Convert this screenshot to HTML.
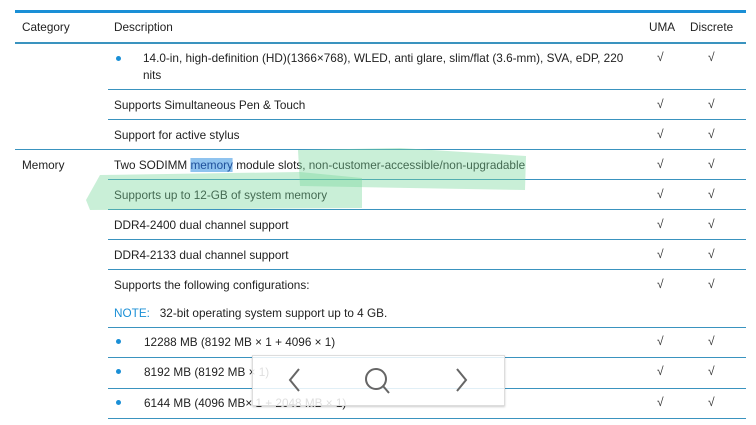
<!DOCTYPE html>
<html><head><meta charset="utf-8"><style>
body{margin:0;width:756px;height:425px;background:#fff;position:relative;overflow:hidden;font-family:"Liberation Sans",sans-serif;font-size:12px;color:#222;}
.t{position:absolute;white-space:nowrap;line-height:14px;transform-origin:0 0;transform:scaleX(0.98);}
.l{position:absolute;height:1px;background:#3a93bf;}
.c{position:absolute;font-size:12px;color:#333;}
.b{position:absolute;width:5px;height:5px;border-radius:50%;background:#1a8fd6;}
</style></head><body>
<div class="l" style="left:15px;top:10px;width:731px;height:3px;background:#1a8fd6"></div>
<div class="t" style="left:22px;top:20px">Category</div>
<div class="t" style="left:114px;top:20px">Description</div>
<div class="t" style="left:649px;top:20px">UMA</div>
<div class="t" style="left:690px;top:20px">Discrete</div>
<div class="l" style="left:15px;top:42px;width:731px;height:2px"></div>

<div class="b" style="left:116px;top:56px"></div>
<div class="t" style="left:143px;top:51px">14.0-in, high-definition (HD)(1366×768), WLED, anti glare, slim/flat (3.6-mm), SVA, eDP, 220</div>
<div class="t" style="left:143px;top:68px">nits</div>
<div class="l" style="left:108px;top:89px;width:638px"></div>
<div class="t" style="left:114px;top:98px">Supports Simultaneous Pen &amp; Touch</div>
<div class="l" style="left:108px;top:119px;width:638px"></div>
<div class="t" style="left:114px;top:128px">Support for active stylus</div>
<div class="l" style="left:15px;top:149px;width:731px"></div>
<div class="t" style="left:22px;top:158px">Memory</div>
<div class="t" style="left:114px;top:158px">Two SODIMM <span style="background:#8fc3ef;color:#1d4f9a">memory</span> module slots, non-customer-accessible/non-upgradable</div>
<div class="l" style="left:108px;top:179px;width:638px"></div>
<div class="t" style="left:114px;top:188px">Supports up to 12-GB of system memory</div>
<div class="l" style="left:108px;top:209px;width:638px"></div>
<div class="t" style="left:114px;top:218px">DDR4-2400 dual channel support</div>
<div class="l" style="left:108px;top:239px;width:638px"></div>
<div class="t" style="left:114px;top:248px">DDR4-2133 dual channel support</div>
<div class="l" style="left:108px;top:269px;width:638px"></div>
<div class="t" style="left:114px;top:278px">Supports the following configurations:</div>
<div class="t" style="left:114px;top:306px"><span style="color:#1a8fd6">NOTE:</span>&nbsp;&nbsp;&nbsp;32-bit operating system support up to 4 GB.</div>
<div class="l" style="left:108px;top:327px;width:638px"></div>
<div class="b" style="left:116px;top:339px"></div>
<div class="t" style="left:144px;top:335px">12288 MB (8192 MB × 1 + 4096 × 1)</div>
<div class="l" style="left:108px;top:357px;width:638px"></div>
<div class="b" style="left:116px;top:369px"></div>
<div class="t" style="left:144px;top:365px">8192 MB (8192 MB × 1)</div>
<div class="l" style="left:108px;top:388px;width:638px"></div>
<div class="b" style="left:116px;top:400px"></div>
<div class="t" style="left:144px;top:396px">6144 MB (4096 MB× 1 + 2048 MB × 1)</div>
<div class="l" style="left:108px;top:418px;width:638px"></div>

<div class="c" style="left:657px;top:50px">√</div><div class="c" style="left:708px;top:50px">√</div>
<div class="c" style="left:657px;top:97px">√</div><div class="c" style="left:708px;top:97px">√</div>
<div class="c" style="left:657px;top:127px">√</div><div class="c" style="left:708px;top:127px">√</div>
<div class="c" style="left:657px;top:157px">√</div><div class="c" style="left:708px;top:157px">√</div>
<div class="c" style="left:657px;top:187px">√</div><div class="c" style="left:708px;top:187px">√</div>
<div class="c" style="left:657px;top:217px">√</div><div class="c" style="left:708px;top:217px">√</div>
<div class="c" style="left:657px;top:247px">√</div><div class="c" style="left:708px;top:247px">√</div>
<div class="c" style="left:657px;top:277px">√</div><div class="c" style="left:708px;top:277px">√</div>
<div class="c" style="left:657px;top:334px">√</div><div class="c" style="left:708px;top:334px">√</div>
<div class="c" style="left:657px;top:364px">√</div><div class="c" style="left:708px;top:364px">√</div>
<div class="c" style="left:657px;top:395px">√</div><div class="c" style="left:708px;top:395px">√</div>

<svg style="position:absolute;left:0;top:0" width="756" height="425">
<polygon points="298,150 400,148 526,156 525,190 300,186" fill="rgba(120,215,155,0.4)"/>
<polygon points="100,175 300,172 362,178 362,208 90,210 86,200" fill="rgba(120,215,155,0.4)"/>
</svg>

<div style="position:absolute;left:252px;top:355px;width:251px;height:49px;background:rgba(255,255,255,0.85);border:1px solid #ddd;box-shadow:0 1px 2px rgba(0,0,0,0.2)"></div>
<svg style="position:absolute;left:252px;top:355px" width="252" height="50" fill="none" stroke="#666" stroke-width="2">
<path d="M47 14 L38 25 L47 36"/>
<circle cx="124" cy="24" r="10"/><path d="M131 31 L137 38"/>
<path d="M205 14 L214 25 L205 36"/>
</svg>
</body></html>
